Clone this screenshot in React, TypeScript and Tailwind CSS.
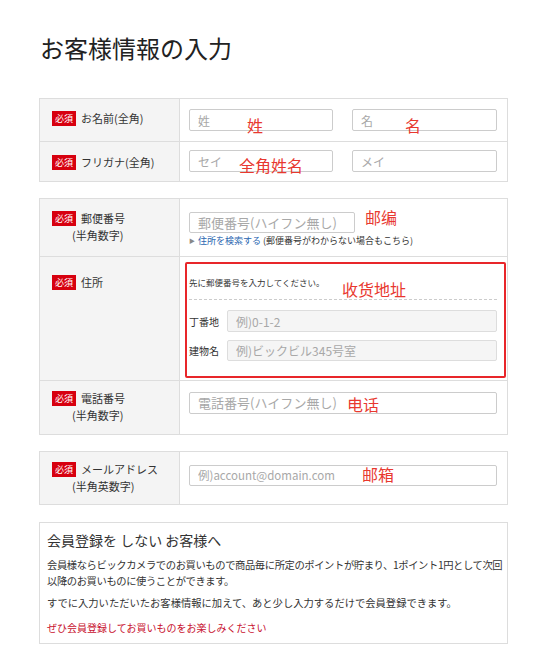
import type { ReactNode } from "react";

const Badge = () => (
  <span className="inline-flex h-[15px] w-[24px] shrink-0 items-center justify-center bg-[#d7000f] text-[9px] leading-none text-white">
    必須
  </span>
);

function Label({ title, sub, pt }: { title: string; sub?: string; pt: string }) {
  return (
    <div className={`w-[140px] shrink-0 border-r border-[#ddd] bg-[#f4f4f4] pl-[12px] ${pt}`}>
      <div className="flex h-[17px] items-center gap-[5px]">
        <Badge />
        <span className="text-[11px] leading-none whitespace-nowrap">{title}</span>
      </div>
      {sub && <div className="pl-[20px] text-[11px] leading-[17px] whitespace-nowrap">{sub}</div>}
    </div>
  );
}

function Field({ placeholder, w, h = "h-[22px]", size = "text-[12px]", gray }: { placeholder: string; w: string; h?: string; size?: string; gray?: boolean }) {
  return (
    <input
      readOnly
      placeholder={placeholder}
      className={`${w} ${h} ${size} rounded-[2px] border px-[8px] outline-none placeholder:text-[#a8a8a8] ${
        gray ? "border-[#ddd] bg-[#f5f5f5]" : "border-[#ccc] bg-white"
      }`}
    />
  );
}

function Note({ children, cls }: { children: ReactNode; cls: string }) {
  return (
    <span className={`absolute font-['Noto_Sans_CJK_SC',sans-serif] text-[16px] leading-none whitespace-nowrap text-[#e8382f] ${cls}`}>
      {children}
    </span>
  );
}

export default function App() {
  return (
    <div className="h-[664px] w-[554px] bg-white pt-[36px] pl-[39px] font-['Noto_Sans_CJK_JP','Noto_Sans',sans-serif] text-[#333]">
      <h1 className="pl-[1px] text-[24px] leading-[24px] font-normal text-[#222]">お客様情報の入力</h1>

      {/* name */}
      <div className="mt-[38px] w-[469px] border border-[#ddd]">
        <div className="flex h-[42px]">
          <Label title="お名前(全角)" pt="pt-[11px]" />
          <div className="relative flex flex-1 items-center gap-[19px] pl-[9px]">
            <Field placeholder="姓" w="w-[144px]" />
            <Field placeholder="名" w="w-[145px]" />
            <Note cls="left-[67px] top-[18px]">姓</Note>
            <Note cls="left-[225px] top-[18px]">名</Note>
          </div>
        </div>
        <div className="flex h-[40px] border-t border-[#ddd]">
          <Label title="フリガナ(全角)" pt="pt-[12px]" />
          <div className="relative flex flex-1 items-start gap-[19px] pt-[8px] pl-[9px]">
            <Field placeholder="セイ" w="w-[144px]" />
            <Field placeholder="メイ" w="w-[145px]" />
            <Note cls="left-[59px] top-[15px]">全角姓名</Note>
          </div>
        </div>
      </div>

      {/* address */}
      <div className="mt-[16px] w-[469px] border border-[#ddd]">
        <div className="flex h-[57px]">
          <Label title="郵便番号" sub="(半角数字)" pt="pt-[11px]" />
          <div className="relative flex-1 pt-[10px] pl-[9px]">
            <Field placeholder="郵便番号(ハイフン無し)" w="w-[166px]" h="h-[21px]" size="text-[13px]" />
            <div className="mt-[2px] flex items-center text-[9px] leading-[12px] whitespace-nowrap">
              <span className="mr-[3px] text-[6px] text-[#888]">▶</span>
              <span className="text-[#2a66b0]">住所を検索する</span>
              <span className="ml-[2px]">(郵便番号がわからない場合もこちら)</span>
            </div>
            <Note cls="left-[185px] top-[10px]">邮编</Note>
          </div>
        </div>
        <div className="flex h-[124px] border-t border-[#ddd]">
          <Label title="住所" pt="pt-[17px]" />
          <div className="relative flex-1 pt-[19px] pr-[10px] pl-[9px]">
            <p className="text-[8.5px] leading-[12px]">先に郵便番号を入力してください。</p>
            <div className="mt-[11px] border-t border-dashed border-[#ccc]" />
            <div className="mt-[10px] flex items-center">
              <span className="w-[38px] text-[10px]">丁番地</span>
              <Field placeholder="例)0-1-2" w="flex-1" size="text-[12px]" gray />
            </div>
            <div className="mt-[8px] flex items-center">
              <span className="w-[38px] text-[10px]">建物名</span>
              <Field placeholder="例)ビックビル345号室" w="flex-1" h="h-[21px]" size="text-[12px]" gray />
            </div>
            <div className="absolute top-[5px] left-[5px] h-[116px] w-[321px] rounded-[2px] border-2 border-[#e8262a]" />
            <Note cls="left-[162px] top-[24px]">收货地址</Note>
          </div>
        </div>
        <div className="flex h-[54px] border-t border-[#ddd]">
          <Label title="電話番号" sub="(半角数字)" pt="pt-[9px]" />
          <div className="relative flex-1 pt-[8px] pr-[10px] pl-[9px]">
            <Field placeholder="電話番号(ハイフン無し)" w="w-full" size="text-[13px]" />
            <Note cls="left-[167px] top-[15px]">电话</Note>
          </div>
        </div>
      </div>

      {/* mail */}
      <div className="mt-[16px] w-[469px] border border-[#ddd]">
        <div className="flex h-[52px]">
          <Label title="メールアドレス" sub="(半角英数字)" pt="pt-[9px]" />
          <div className="relative flex-1 pt-[9px] pr-[10px] pl-[9px]">
            <Field placeholder="例)account@domain.com" w="w-full" h="h-[21px]" size="text-[11.5px]" />
            <Note cls="left-[182px] top-[14px]">邮箱</Note>
          </div>
        </div>
      </div>

      {/* guest */}
      <div className="mt-[17px] h-[122px] w-[469px] border border-[#ddd] px-[7px] pt-[7px]">
        <h2 className="text-[14px] leading-[20px] font-normal">会員登録を しない お客様へ</h2>
        <p className="mt-[7px] text-[10.3px] leading-[16px] tracking-[-0.4px] whitespace-nowrap">
          会員様ならビックカメラでのお買いもので商品毎に所定のポイントが貯まり、1ポイント1円として次回
          <br />
          以降のお買いものに使うことができます。
        </p>
        <p className="mt-[6px] text-[10.3px] leading-[16px] whitespace-nowrap">
          すでに入力いただいたお客様情報に加えて、あと少し入力するだけで会員登録できます。
        </p>
        <p className="mt-[9px] text-[10px] leading-[16px] whitespace-nowrap text-[#c8102e]">
          ぜひ会員登録してお買いものをお楽しみください
        </p>
      </div>
    </div>
  );
}
